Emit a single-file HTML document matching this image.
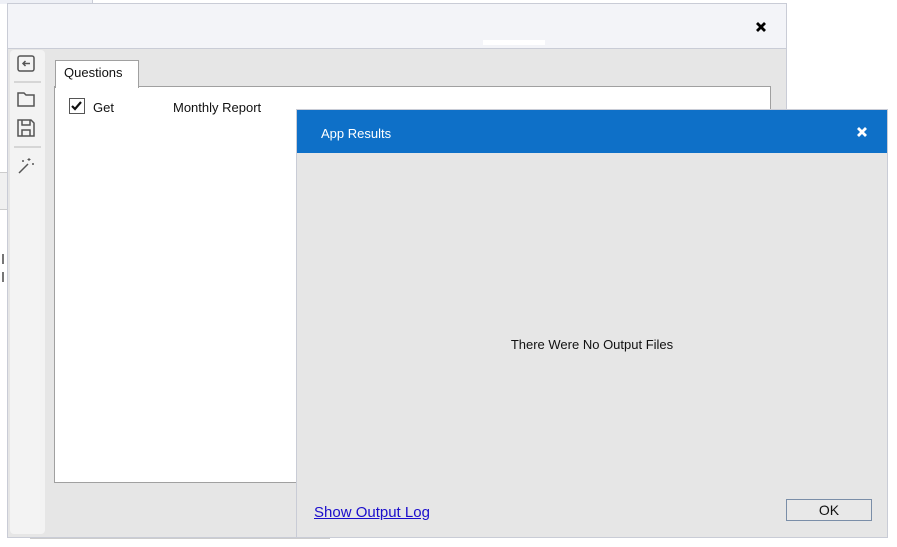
<!DOCTYPE html>
<html><head><meta charset="utf-8"><style>
body{margin:0;width:897px;height:547px;background:#fff;position:relative;overflow:hidden;font-family:"Liberation Sans","DejaVu Sans",sans-serif;font-size:13px;color:#111}
.a{position:absolute}
</style></head><body>
<div class="a" style="left:0;top:0;width:92px;height:4px;background:#eef0f6;border-right:1px solid #c9ccd6"></div>
<div class="a" style="left:0;top:172px;width:7px;height:36px;background:#f0f0f0;border-top:1px solid #ccc;border-bottom:1px solid #ccc"></div>
<div class="a" style="left:2px;top:254px;width:2px;height:10px;background:#777"></div>
<div class="a" style="left:2px;top:272px;width:2px;height:10px;background:#777"></div>
<div class="a" style="left:7px;top:3px;width:778px;height:533px;background:#e6e6e6;border:1px solid #c9ccd6"></div>
<div class="a" style="left:8px;top:4px;width:778px;height:44px;background:#f3f4f8;border-bottom:1px solid #c9ccd6"></div>
<div class="a" style="left:483px;top:40px;width:62px;height:5px;background:#fff"></div>
<svg class="a" style="left:755px;top:21px" width="12" height="12"><path d="M2 2l8 8M10 2l-8 8" stroke="#000" stroke-width="2.8"/></svg>
<div class="a" style="left:10px;top:50px;width:35px;height:484px;background:#f3f3f3;border-radius:4px"></div>
<svg class="a" style="left:14px;top:52px" width="28" height="130" viewBox="0 0 28 130" fill="none" stroke="#555" stroke-width="1.5">
<rect x="4" y="4" width="16" height="15" rx="2"/><path d="M16 11.5h-7M11.5 9l-2.5 2.5 2.5 2.5"/>
<line x1="0" y1="30" x2="27" y2="30" stroke="#ccc"/>
<path d="M4 41h6l2 2h8v11H4z"/>
<path d="M4 68h13l3 3v13H4z M8 68v5h8v-5 M8 84v-6h8v6"/>
<line x1="0" y1="95" x2="27" y2="95" stroke="#ccc"/>
<path d="M5 121l9-9"/><path d="M15 106v3M13.5 107.5h3M19 111v2M18 112h2M9 108v2M8 109h2" stroke-width="1"/>
</svg>
<div class="a" style="left:54px;top:86px;width:715px;height:395px;background:#fff;border:1px solid #a0a0a0"></div>
<div class="a" style="left:55px;top:60px;width:82px;height:27px;background:#fff;border:1px solid #a0a0a0;border-bottom:none"></div>
<div class="a" style="left:64px;top:65px">Questions</div>
<div class="a" style="left:69px;top:98px;width:14px;height:14px;border:1px solid #555;background:#fff"></div>
<svg class="a" style="left:69px;top:98px" width="16" height="16"><path d="M3 8l3 3 6-7" stroke="#111" stroke-width="2.2" fill="none"/></svg>
<div class="a" style="left:93px;top:100px">Get</div>
<div class="a" style="left:173px;top:100px">Monthly Report</div>
<div class="a" style="left:296px;top:109px;width:590px;height:427px;background:#e6e6e6;border:1px solid #c9ccd6"></div>
<div class="a" style="left:297px;top:110px;width:590px;height:43px;background:#0e70c8"></div>
<div class="a" style="left:321px;top:126px;color:#fff">App Results</div>
<svg class="a" style="left:856px;top:126px" width="12" height="12"><path d="M2 2l8 8M10 2l-8 8" stroke="#fff" stroke-width="2.8"/></svg>
<div class="a" style="left:297px;top:337px;width:590px;text-align:center">There Were No Output Files</div>
<div class="a" style="left:314px;top:504px;color:#1a0dcc;text-decoration:underline;font-size:15px">Show Output Log</div>
<div class="a" style="left:786px;top:499px;width:84px;height:20px;border:1px solid #7a8ea8;background:#e8e8e8;text-align:center;line-height:21px;font-size:14px">OK</div>
<div class="a" style="left:30px;top:538px;width:300px;height:1px;background:#ccc"></div>
</body></html>
